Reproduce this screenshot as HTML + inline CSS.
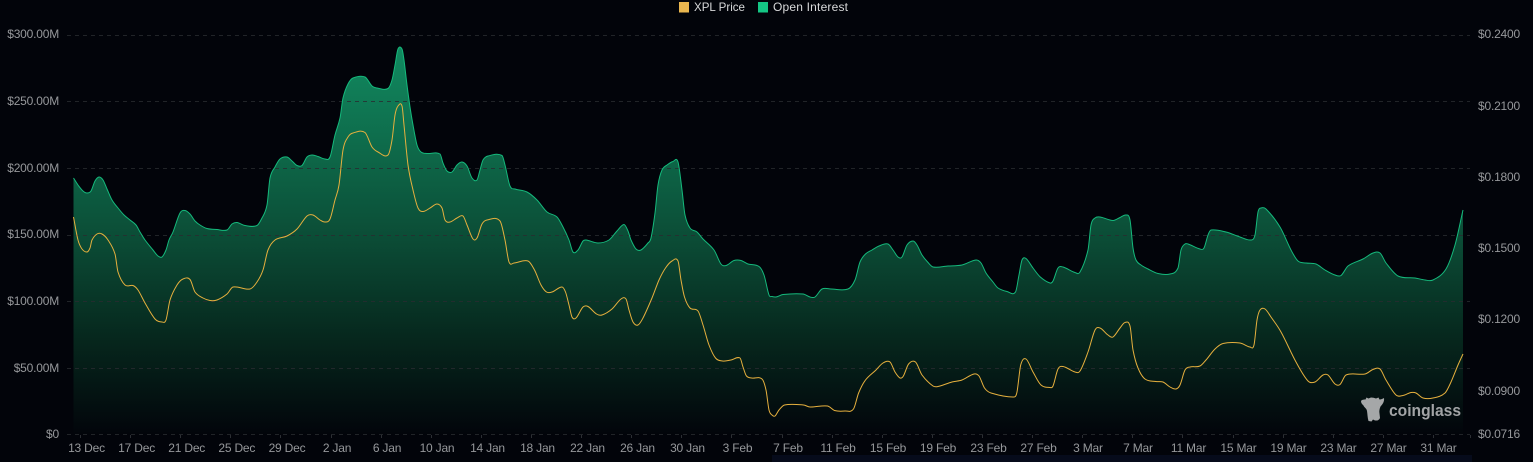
<!DOCTYPE html>
<html><head><meta charset="utf-8"><style>
html,body{margin:0;padding:0;background:#02040a;width:1533px;height:462px;overflow:hidden}
svg{display:block}
text{font-family:"Liberation Sans",sans-serif}
.a{font-size:12px;letter-spacing:-0.2px;fill:#96989b}
</style></head><body>
<svg width="1533" height="462" viewBox="0 0 1533 462" xmlns="http://www.w3.org/2000/svg">
<defs><linearGradient id="g" gradientUnits="userSpaceOnUse" x1="0" y1="49" x2="0" y2="436">
<stop offset="0" stop-color="#118a60"/><stop offset="0.5" stop-color="#0b4b35"/><stop offset="0.75" stop-color="#06271d"/><stop offset="1" stop-color="#02040a"/></linearGradient></defs>
<rect width="1533" height="462" fill="#02040a"/>
<rect x="772" y="455" width="700" height="7" fill="#060b1b"/>
<path id="area" fill="url(#g)" d=""/>
<g stroke="#292c30" stroke-width="1" stroke-dasharray="4 4" opacity="0.8">
<path d="M67 35.5H1470M67 101.5H1470M67 168.5H1470M67 235.5H1470M67 301.5H1470M67 368.5H1470M67 434.5H1470"/>
</g>
<path id="ticks" stroke="#2b2e33" stroke-width="1" fill="none" d=""/>
<path id="oi" fill="none" stroke="#15b97c" stroke-width="1" d=""/>
<path id="px" fill="none" stroke="#e6b03e" stroke-width="1" d=""/>

<rect x="679" y="2" width="10" height="10.5" fill="#e9b64f"/>
<text x="694" y="11" font-size="12" fill="#d8d9da" textLength="51" lengthAdjust="spacingAndGlyphs">XPL Price</text>
<rect x="758" y="2" width="10" height="10.5" fill="#14c684"/>
<text x="773" y="11" font-size="12" fill="#d8d9da" textLength="75" lengthAdjust="spacing">Open Interest</text>

<g text-anchor="end">
<text class="a" x="59" y="38">$300.00M</text>
<text class="a" x="59" y="105">$250.00M</text>
<text class="a" x="59" y="172">$200.00M</text>
<text class="a" x="59" y="238">$150.00M</text>
<text class="a" x="59" y="305">$100.00M</text>
<text class="a" x="59" y="372">$50.00M</text>
<text class="a" x="59" y="438">$0</text>
</g>
<g>
<text class="a" x="1478" y="38">$0.2400</text>
<text class="a" x="1478" y="110">$0.2100</text>
<text class="a" x="1478" y="181">$0.1800</text>
<text class="a" x="1478" y="252">$0.1500</text>
<text class="a" x="1478" y="323">$0.1200</text>
<text class="a" x="1478" y="395">$0.0900</text>
<text class="a" x="1478" y="438">$0.0716</text>
</g>
<g text-anchor="middle">
<text class="a" x="86.5" y="452">13 Dec</text>
<text class="a" x="136.6" y="452">17 Dec</text>
<text class="a" x="186.7" y="452">21 Dec</text>
<text class="a" x="236.8" y="452">25 Dec</text>
<text class="a" x="287" y="452">29 Dec</text>
<text class="a" x="337" y="452">2 Jan</text>
<text class="a" x="387" y="452">6 Jan</text>
<text class="a" x="437" y="452">10 Jan</text>
<text class="a" x="487.5" y="452">14 Jan</text>
<text class="a" x="537.5" y="452">18 Jan</text>
<text class="a" x="587.5" y="452">22 Jan</text>
<text class="a" x="637.5" y="452">26 Jan</text>
<text class="a" x="687.5" y="452">30 Jan</text>
<text class="a" x="737.5" y="452">3 Feb</text>
<text class="a" x="788" y="452">7 Feb</text>
<text class="a" x="838" y="452">11 Feb</text>
<text class="a" x="888" y="452">15 Feb</text>
<text class="a" x="938" y="452">19 Feb</text>
<text class="a" x="988.5" y="452">23 Feb</text>
<text class="a" x="1038.5" y="452">27 Feb</text>
<text class="a" x="1088" y="452">3 Mar</text>
<text class="a" x="1138" y="452">7 Mar</text>
<text class="a" x="1188.5" y="452">11 Mar</text>
<text class="a" x="1238.5" y="452">15 Mar</text>
<text class="a" x="1288.5" y="452">19 Mar</text>
<text class="a" x="1338.5" y="452">23 Mar</text>
<text class="a" x="1388.5" y="452">27 Mar</text>
<text class="a" x="1438.5" y="452">31 Mar</text>
</g>
<path fill="#a5a7a8" d="M1361 401C1362 399.500 1364 399.500 1365.500 399.500L1366.500 397.500L1368.500 398.500L1371 397.500L1373.500 397.800L1376 398.500L1378.500 397.500L1379.500 399.500C1381 399.500 1383 398.500 1384 398C1384.500 401 1383 404 1380.500 406.500C1379.500 409 1379 411 1379.500 413.500L1380 418C1378.500 421 1376.500 420.500 1375 420.500L1373 419.500L1371.500 421.500L1368.500 421C1367.500 418 1367.500 414 1367 411C1366.500 408 1364.500 408 1363.500 405.500C1362 404 1361 403 1361 401Z"/>
<text x="1389" y="416" font-size="17" font-weight="700" fill="#a2a4a6" textLength="72" lengthAdjust="spacingAndGlyphs">coinglass</text>
</svg>
<script>
var OI=[73.5,178,78,185,83,191,87,193,91,191,95,181,99,177,103,180,107,189,112,200,118,208,124,215,130,220,136,225,140,232,145,240,153,250,158,256,162,257,166,250,169,240,173,232,180,213,185,210.500,190,214,195,221,200,225,207,228.500,217,229.500,227,230,232,224,237,222.500,245,225.500,257,225.500,262,218,267,205,270,178,275,167,280,159,287,157,292,161,297,165.500,302,165.500,307,157,312,155,318,156.500,325,159,330,157,335,135,340,118,343,98,348,84,353,78,365,77,372,86,377,88,388,88.500,392,80,395,65,398,49,402,49,404,60,407,85,410,107,413,125,417,145,421,152,427,153.500,440,154,443,163,447,171,452,172,457,165,462,162,467,166,472,178,477,180,480,170,483,160,488,156,502,155.500,505,165,510,186,515,189,527,192,537,200,547,212,557,217,563,227,569,240,573,252,578,250,583,241,586,240,598,243,609,240,617,231,624,224.500,628,231,631,240,636,249,641,250,648,243,651,238,655,213,658,185,662,170,667,165,673,161.500,678,162,682,190,685,215,690,228,697,232,703,239,714,250,721,264,726,265.500,734,260.500,741,260.500,748,264,759,266.500,764,275,769,295,772,296.500,776,297,783,294.500,803,294,810,297,815,297,822,289,831,289,848,289,855,280,860,262,865.500,254,872,250,879,246,888,244,893,250,898,257,902,257,907,245,913,241,917,245,922,255,927.600,262,933,267,948,266,962,265,976,260,981,263,986,273,993,282,998,288,1007,291.500,1015.500,292,1019,275,1022,260,1026,258.500,1033,268,1040,276.700,1050,283,1053,281,1058,268,1063,267,1075,272.500,1080,272,1088,250,1091,225,1095,218,1100,217,1113,220.500,1120,217.500,1126,215,1130,220,1133,248,1136,260,1141,265,1148,269,1158,273.500,1170,274,1178,268,1181,250,1185,244,1188,244,1200,249,1204,248,1208,235,1211,230,1226,232,1240,237,1251,240,1255,235,1258,212,1261,208,1266,209,1280,227,1291,250,1298,261,1306,263,1316,264,1325,270,1335,275,1341,275.500,1348,266,1363,259,1373,253,1380,253,1386,263,1398,276,1415,278,1425,280,1433,280,1446,269,1455,245,1463,210];
var PX=[73.5,217,78,240,82,249,87,252,90,248,92,240,97,234,102,234,108,240,115,254,118,272,125,285,133,285.500,138,290,145,303,155,319,162,322,166,320,170,300,177,285,183,279,190,279.500,195,292,203,298,210,300.500,217,300,227,294,233,287,250,289,257,282,263,270,268,250,275,240,287,236,297,229,307,216,313,215,320,220,325,222,330,219,335,200,339,185,343,150,348,137,353,133,365,132.500,372,147,378,152,388,155,392,140,395,115,398,106,402,106,404,125,408,165,413,190,418,208,423,211.500,430,208,437,204,442,208,445,220,450,222,457,218,463,216,467,225,473,239,477,238,482,224,487,220,500,221,505,240,509,262,514,263,528,261,534.500,270,541,285,546.500,292,552,292,562,287,565.500,292,569,305,572,317,576,318,583,307,588,306.500,596.500,314,602,315,612,309,621,299,626,299,629,310,633,322,638,325,643,318,652,298,659,280,665.500,268,672,261,678,261,681,280,684.500,297,690,308,698,311,703,325,709,345,715.500,358,722.500,361,731,360,740,358,743,367,746.500,376,752,378,762,379,766,390,769,410,772,415,775,416,779,410,784.500,405,803.500,405,810,407,827.600,406,834.500,410.500,845,411,853.500,409,858.600,393,865.500,380,876,370,883,363,890,362,895,372,900,378,903.400,376,908.600,364,915.500,362,922,375,933,386,938,386.500,952,382,962,380,974,374,979,376,984.500,388,991,393,1014,397,1017,392,1020.700,365,1026,359,1033,372,1041,385,1050,387.500,1053,386,1058,369,1063,366.500,1075,372,1080,371,1088,352,1095,330,1100,328,1108,335,1113,337,1120,328,1125,322.500,1130,326,1133,350,1138,368,1145,379,1156,381.500,1163,382,1170,387,1176,389,1180,385,1185,370,1190,367,1200,366,1206,360,1215,349,1223,343.500,1240,343,1250,347,1254,345,1257,320,1260,310,1265,309,1271,317,1281,332,1296,362,1308,381,1315,382,1323,375,1328,375,1335,384,1340,384.500,1346,375,1365,374,1373,369.500,1380,369,1386,380,1396,395,1403,395.500,1411,392.500,1416,393,1423,398,1433,398,1445,393,1451,382,1458,365,1463,354];
function smooth(a){
 var n=a.length/2,x=[],y=[],m=[],i;
 for(i=0;i<n;i++){x[i]=a[2*i];y[i]=a[2*i+1]}
 for(i=0;i<n;i++){var l=Math.max(i-1,0),r=Math.min(i+1,n-1);m[i]=(y[r]-y[l])/(x[r]-x[l])}
 var d="M"+x[0]+" "+y[0];
 for(i=0;i<n-1;i++){var h=(x[i+1]-x[i])/3;
  d+="C"+(x[i]+h).toFixed(1)+" "+(y[i]+m[i]*h).toFixed(1)+" "+(x[i+1]-h).toFixed(1)+" "+(y[i+1]-m[i+1]*h).toFixed(1)+" "+x[i+1]+" "+y[i+1];}
 return d;
}
var d=smooth(OI);
document.getElementById("oi").setAttribute("d",d);
document.getElementById("area").setAttribute("d",d+"L1463 435L73.5 435Z");
document.getElementById("px").setAttribute("d",smooth(PX));
var t="";for(var i=0;i<28;i++){var tx=Math.round(80+i*50.11)+.5;t+="M"+tx+" 435V438";}
t+="M1470.500 435V438";
document.getElementById("ticks").setAttribute("d",t);
</script>
</body></html>
